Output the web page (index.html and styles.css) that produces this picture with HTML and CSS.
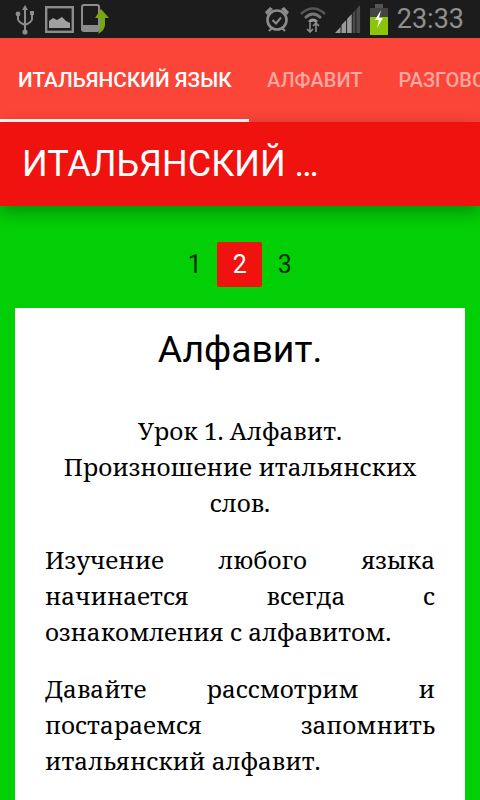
FILE: index.html
```html
<!DOCTYPE html>
<html lang="ru">
<head>
<meta charset="utf-8">
<title>Итальянский язык</title>
<link rel="stylesheet" href="styles.css">
</head>
<body>
<div class="status">
  <div class="status-left">
    <svg class="ic ic-usb" width="20" height="32" viewBox="0 0 20 32"><g fill="none" stroke="#8c8c8c" stroke-width="2"><path d="M10 5V29"/><path d="M3 12v4q0 3 7 6q7-3 7-6v-4"/></g><path d="M10 2l3 5H7z" fill="#8c8c8c"/><circle cx="3" cy="11" r="2.400" fill="#8c8c8c"/><rect x="15" y="8" width="4" height="4" fill="#8c8c8c"/><circle cx="10" cy="29" r="2.600" fill="#8c8c8c"/></svg>
    <svg class="ic" width="29" height="27" viewBox="0 0 29 27"><rect x="1.200" y="1.200" width="26.600" height="24.600" fill="none" stroke="#8c8c8c" stroke-width="2.400"/><path d="M4 22v-7l4-3 4 2 5-3 4 4 4 2v5z" fill="#a0a0a0"/></svg>
    <svg class="ic" width="30" height="30" viewBox="0 0 30 30"><rect x="1" y="1" width="17" height="26" rx="2" fill="none" stroke="#8c8c8c" stroke-width="2"/><rect x="1" y="21" width="17" height="6" fill="#8c8c8c"/><path d="M20 5l8 9h-4v7q0 5-7 9q2-4 2-9v-7h-5z" fill="#76a814"/></svg>
  </div>
  <div class="status-right">
    <svg class="ic ic-alarm" width="26" height="28" viewBox="0 0 26 28"><circle cx="13" cy="15" r="9.500" fill="none" stroke="#8c8c8c" stroke-width="2.600"/><path d="M8.500 15l3.500 3.500 5-6" fill="none" stroke="#8c8c8c" stroke-width="2"/><path d="M1 7l5-5 3 2-6 6zM25 7l-5-5-3 2 6 6z" fill="#8c8c8c"/><path d="M5 26l3-3M21 26l-3-3" stroke="#8c8c8c" stroke-width="2"/></svg>
    <svg class="ic" width="26" height="28" viewBox="0 0 26 28"><g fill="none" stroke-width="2.600"><path d="M1 9q12-11 24 0" stroke="#555"/><path d="M5 13q8-8 16 0" stroke="#777"/><path d="M9 17q4-4 8 0" stroke="#999"/></g><path d="M10 18v9M7 24l3 3 3-3M16 27v-9M13 21l3-3 3 3" fill="none" stroke="#8c8c8c" stroke-width="1.600"/></svg>
    <svg class="ic" width="26" height="28" viewBox="0 0 28 28" preserveAspectRatio="none"><path d="M0 28l6-6v6zM7 28v-8l5-5v13zM13 28V14l5-5v19z" fill="#9a9a9a"/><path d="M19 28V8l3-3v23zM23 28V4l4-4v28z" fill="#4a4a4a"/></svg>
    <svg class="ic" width="18" height="32" viewBox="0 0 18 32"><rect x="5" y="1" width="8" height="4" fill="#555"/><rect x="0" y="5" width="18" height="27" fill="#444"/><rect x="0" y="14" width="18" height="18" fill="#8cc40a"/><path d="M11 7l-6 10h4l-2 8 6-10h-4z" fill="#fff"/></svg>
    <span class="clock">23:33</span>
  </div>
</div>

<nav class="tabs">
  <div class="tab tab-active">ИТАЛЬЯНСКИЙ ЯЗЫК</div>
  <div class="tab">АЛФАВИТ</div>
  <div class="tab">РАЗГОВОРНИК</div>
</nav>

<header class="titlebar"><h1 class="title">ИТАЛЬЯНСКИЙ …</h1></header>

<main class="content">
  <div class="pager">
    <span class="page">1</span>
    <span class="page page-current">2</span>
    <span class="page">3</span>
  </div>
  <article class="card">
    <h2 class="card-title">Алфавит.</h2>
    <p class="lead">Урок 1. Алфавит. Произношение итальянских слов.</p>
    <p class="para">Изучение любого языка начинается всегда с ознакомления с алфавитом.</p>
    <p class="para">Давайте рассмотрим и постараемся запомнить итальянский алфавит.</p>
  </article>
</main>
</body>
</html>
```
FILE: styles.css
```css
* { box-sizing: border-box; }
html, body { margin: 0; padding: 0; }
body {
  width: 480px;
  height: 800px;
  overflow: hidden;
  background: #03cf06;
  font-family: Roboto, sans-serif;
}
.status {
  height: 38px;
  background: #1c1c1c;
  display: flex;
  justify-content: space-between;
  align-items: center;
  padding: 0 16px 0 15px;
}
.status-left, .status-right { display: flex; align-items: center; }
.status-left { gap: 7px; }
.status-right { gap: 9px; }
.ic { display: block; flex: none; }
.ic-usb { margin-right: 3px; }
.ic-alarm { margin-right: 1px; }
.clock {
  font-weight: 400;
  font-size: 27px;
  color: #8f8f8f;
}
.tabs {
  height: 84px;
  background: #fb4538;
  display: flex;
  overflow: hidden;
  white-space: nowrap;
}
.tab {
  flex: none;
  padding: 0 18px;
  line-height: 84px;
  font-size: 20px;
  font-weight: 500;
  color: #fca79f;
}
.tab-active {
  color: #fff;
  font-size: 20.800px;
  border-bottom: 3px solid #fff;
  width: 249px;
}
.titlebar {
  height: 84px;
  background: #f0120f;
  display: flex;
  align-items: center;
  padding: 0 22px;
  box-shadow: 0 6px 16px rgba(0, 0, 0, 0.3);
  position: relative;
}
.title {
  margin: 0;
  font-size: 36px;
  font-weight: 400;
  color: #fff;
}
.content { padding: 36px 15px 0; }
.pager {
  display: flex;
  justify-content: center;
  height: 45px;
  padding-right: 0.400px;
}
.page {
  width: 45px;
  height: 45px;
  display: flex;
  align-items: center;
  justify-content: center;
  font-size: 25px;
  color: #052b05;
  border-radius: 2px;
}
.page-current { background: #f0120f; color: #fff; }
.card {
  margin-top: 21px;
  background: #fff;
  padding: 16px 30px;
  height: 600px;
  color: #000;
}
.card-title {
  margin: 0 0 39px;
  text-align: center;
  font-size: 37.400px;
  font-weight: 400;
  line-height: 50px;
}
.lead, .para {
  font-family: "Noto Serif", "DejaVu Serif", "Liberation Serif", serif;
  font-size: 24.300px;
  line-height: 36px;
  margin: 0 0 21px;
}
.lead { text-align: center; }
.para { text-align: justify; }
```
